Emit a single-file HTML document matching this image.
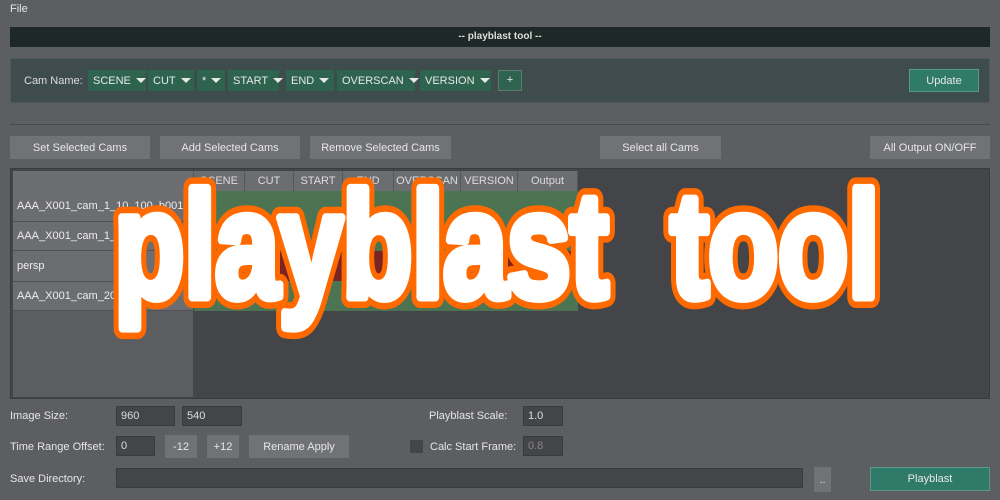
<!DOCTYPE html>
<html><head><meta charset="utf-8"><style>
*{box-sizing:border-box;margin:0;padding:0}
body{width:1000px;height:500px;background:#5d5e62;font-family:"Liberation Sans",sans-serif;font-size:11px;color:#e6e6e6;position:relative;overflow:hidden}
.a{position:absolute}
.btn{position:absolute;background:#717275;color:#e8e8e8;display:flex;align-items:center;justify-content:center;height:23px}
.dd{position:absolute;top:70px;height:21px;background:#2e6350;color:#e8e8e8;display:flex;align-items:center;padding-left:5px;font-size:11px}
.dd:after{content:"";border-left:5px solid transparent;border-right:5px solid transparent;border-top:5px solid #e8e8e8;margin-left:5px}
.fld{position:absolute;background:#444548;border:1px solid #3a3b3d;color:#ddd;height:20px;padding-left:4px;display:flex;align-items:center}
.hd{position:absolute;top:171px;height:20px;background:#6c6d70;color:#ddd;display:flex;align-items:center;justify-content:center;border-right:1px solid #55565a}
.rh{position:absolute;left:13px;width:180px;background:#6c6d70;color:#eee;padding-left:4px;display:flex;align-items:center;border-bottom:1px solid #505155}
</style></head><body>
<div class="a" style="left:10px;top:3px">File</div>
<div class="a" style="left:10px;top:27px;width:980px;height:20px;background:#1e2826;color:#ddd;text-align:center;line-height:20px;font-weight:bold;font-size:10px">-- playblast tool --</div>
<div class="a" style="left:10px;top:58px;width:980px;height:45px;background:#3f4c4d;border:1px solid #4e5a5a"></div>
<div class="a" style="left:24px;top:75px;color:#ddd">Cam Name:</div>
<div class="dd" style="left:88px;width:58px">SCENE</div>
<div class="dd" style="left:148px;width:46px">CUT</div>
<div class="dd" style="left:197px;width:28px">*</div>
<div class="dd" style="left:228px;width:51px">START</div>
<div class="dd" style="left:286px;width:48px">END</div>
<div class="dd" style="left:337px;width:78px">OVERSCAN</div>
<div class="dd" style="left:420px;width:71px">VERSION</div>
<div class="a" style="left:498px;top:70px;width:24px;height:21px;background:#2e6350;border:1px solid #5c7a70;text-align:center;line-height:19px">+</div>
<div class="btn" style="left:909px;top:69px;width:70px;height:23px;background:#2f7a68;border:1px solid #5a9888">Update</div>
<div class="a" style="left:10px;top:124px;width:980px;height:1px;background:#48494c"></div>
<div class="btn" style="left:10px;top:136px;width:140px">Set Selected Cams</div>
<div class="btn" style="left:160px;top:136px;width:140px">Add Selected Cams</div>
<div class="btn" style="left:310px;top:136px;width:141px">Remove Selected Cams</div>
<div class="btn" style="left:600px;top:136px;width:121px">Select all Cams</div>
<div class="btn" style="left:870px;top:136px;width:120px">All Output ON/OFF</div>
<div class="a" style="left:10px;top:168px;width:980px;height:231px;background:#444548;border:1px solid #3a3b3e"></div>
<div class="a" style="left:13px;top:171px;width:180px;height:226px;background:#5c5d61"></div>
<div class="hd" style="left:13px;width:181px"></div>
<div class="hd" style="left:194px;width:51px">SCENE</div>
<div class="hd" style="left:245px;width:49px">CUT</div>
<div class="hd" style="left:294px;width:49px">START</div>
<div class="hd" style="left:343px;width:51px">END</div>
<div class="hd" style="left:394px;width:67px">OVERSCAN</div>
<div class="hd" style="left:461px;width:57px">VERSION</div>
<div class="hd" style="left:518px;width:60px">Output</div>
<div class="a" style="left:194px;top:191px;width:384px;height:120px;background:#4d7452"></div>
<div class="a" style="left:194px;top:251px;width:384px;height:30px;background:#7a2424"></div>
<div class="rh" style="top:191px;height:31px">AAA_X001_cam_1_10_100_b001</div>
<div class="rh" style="top:222px;height:29px">AAA_X001_cam_1_40</div>
<div class="rh" style="top:251px;height:31px">persp</div>
<div class="rh" style="top:282px;height:29px">AAA_X001_cam_20_50_b003</div>
<svg class="a" style="left:0;top:0" width="1000" height="500">
<g transform="translate(114,297) scale(0.77,1)" font-family="Liberation Sans, sans-serif" font-weight="bold" font-size="150" letter-spacing="-1" stroke-linejoin="round" stroke-linecap="round">
<text x="0" y="0" fill="#ff6a00" stroke="#ff6a00" stroke-width="22" xml:space="preserve">playblast  tool</text>
<text x="0" y="0" fill="#fff" stroke="#fff" stroke-width="9" xml:space="preserve">playblast  tool</text>
</g></svg>
<div class="a" style="left:10px;top:410px">Image Size:</div>
<div class="fld" style="left:116px;top:406px;width:59px">960</div>
<div class="fld" style="left:182px;top:406px;width:60px">540</div>
<div class="a" style="left:429px;top:410px">Playblast Scale:</div>
<div class="fld" style="left:523px;top:406px;width:40px">1.0</div>
<div class="a" style="left:10px;top:441px">Time Range Offset:</div>
<div class="fld" style="left:116px;top:436px;width:39px">0</div>
<div class="btn" style="left:165px;top:435px;width:32px">-12</div>
<div class="btn" style="left:207px;top:435px;width:32px">+12</div>
<div class="btn" style="left:249px;top:435px;width:100px">Rename Apply</div>
<div class="a" style="left:410px;top:440px;width:13px;height:13px;background:#444548"></div>
<div class="a" style="left:430px;top:441px">Calc Start Frame:</div>
<div class="fld" style="left:523px;top:436px;width:40px;color:#888">0.8</div>
<div class="a" style="left:10px;top:473px">Save Directory:</div>
<div class="fld" style="left:116px;top:468px;width:687px"></div>
<div class="btn" style="left:814px;top:467px;width:17px;height:25px">..</div>
<div class="btn" style="left:870px;top:467px;width:120px;height:24px;background:#2f7a68;border:1px solid #5a9888">Playblast</div>
</body></html>
